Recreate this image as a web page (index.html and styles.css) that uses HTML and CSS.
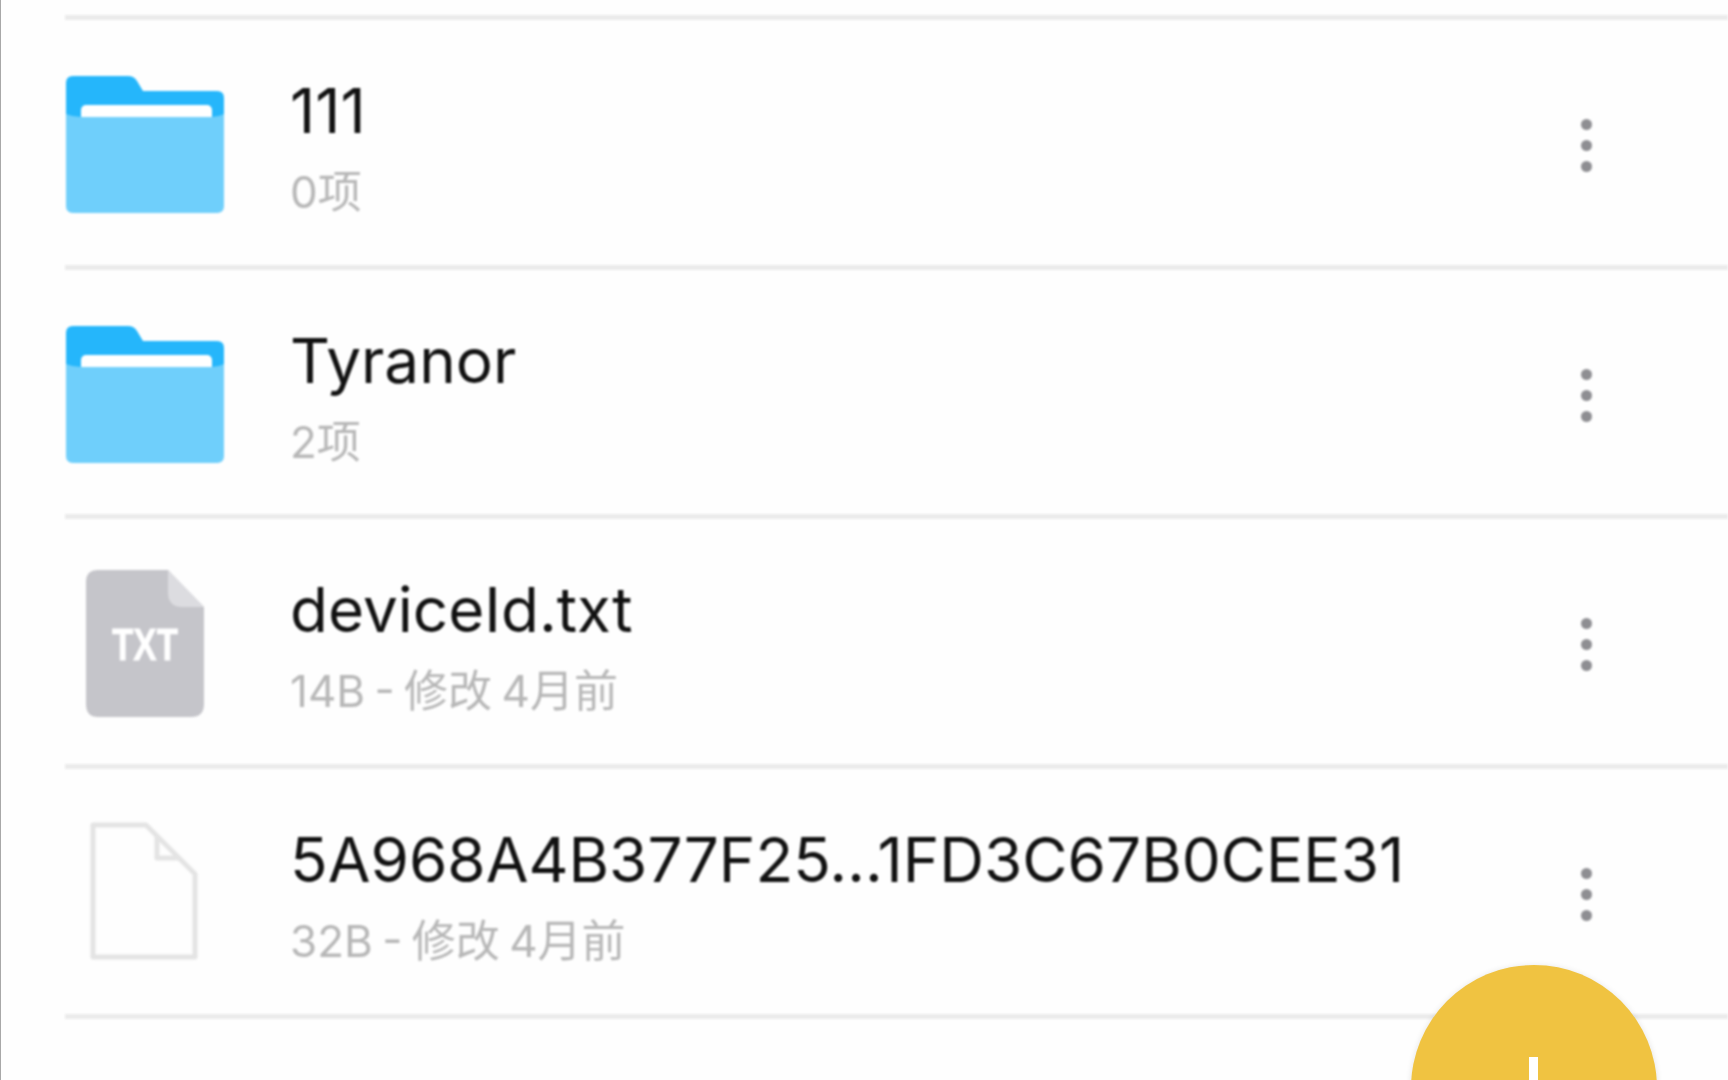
FILE: index.html
```html
<!DOCTYPE html>
<html lang="zh">
<head>
<meta charset="utf-8">
<title>Files</title>
<link rel="stylesheet" href="styles.css">
</head>
<body>
<main class="screen">
  <ul class="list">
    <li class="row">
      <svg class="icon" viewBox="0 0 158 137"><path class="f-back" d="M7 0H62Q68 0 71 5L77 15H151Q158 15 158 22V60H0V7Q0 0 7 0Z"/><rect class="f-paper" x="15" y="29" width="131" height="16" rx="5"/><path class="f-front" d="M0 38Q7 41 15 41H146Q152 41 158 38V130Q158 137 151 137H7Q0 137 0 130Z"/></svg>
      <div class="info"><div class="name">111</div><div class="meta">0项</div></div>
      <div class="more"><i></i><i></i><i></i></div>
    </li>
    <li class="row">
      <svg class="icon" viewBox="0 0 158 137"><path class="f-back" d="M7 0H62Q68 0 71 5L77 15H151Q158 15 158 22V60H0V7Q0 0 7 0Z"/><rect class="f-paper" x="15" y="29" width="131" height="16" rx="5"/><path class="f-front" d="M0 38Q7 41 15 41H146Q152 41 158 38V130Q158 137 151 137H7Q0 137 0 130Z"/></svg>
      <div class="info"><div class="name">Tyranor</div><div class="meta">2项</div></div>
      <div class="more"><i></i><i></i><i></i></div>
    </li>
    <li class="row">
      <svg class="icon" viewBox="0 0 158 147"><path class="t-body" d="M32 0H102L138 37V134Q138 147 125 147H32Q20 147 20 134V12Q20 0 32 0Z"/><path class="t-fold" d="M102 0L138 37H116Q102 37 102 22Z"/><text class="t-label" x="79" y="90" textLength="66" lengthAdjust="spacingAndGlyphs">TXT</text></svg>
      <div class="info"><div class="name">deviceId.txt</div><div class="meta">14B - 修改 4月前</div></div>
      <div class="more"><i></i><i></i><i></i></div>
    </li>
    <li class="row">
      <svg class="icon" viewBox="0 2 158 137"><path class="b-file" d="M27 2H80L129 51V134H27Z"/><path class="b-fold" d="M91 13V35H113"/></svg>
      <div class="info"><div class="name">5A968A4B377F25…1FD3C67B0CEE31</div><div class="meta">32B - 修改 4月前</div></div>
      <div class="more"><i></i><i></i><i></i></div>
    </li>
  </ul>
  <button class="fab" aria-label="add"><span class="plus"></span></button>
</main>
</body>
</html>
```

FILE: styles.css
```css
html, body {
  margin: 0;
  padding: 0;
  height: 100%;
  background: #fff;
}

.screen {
  position: relative;
  box-sizing: border-box;
  width: 1728px;
  height: 1080px;
  overflow: hidden;
  padding-top: 15px;
  border-left: 1px solid #a8a8a8;
  background: #fefefe;
  font-family: Inter, "Noto Sans CJK SC", sans-serif;
}

.list {
  list-style: none;
  margin: 0 0 0 64px;
  padding: 0;
  border-top: 5px solid #ebebeb;
  filter: blur(0.8px);
}

.row {
  box-sizing: border-box;
  height: 249.7px;
  display: flex;
  align-items: center;
  border-bottom: 5px solid #ebebeb;
}

.icon {
  flex: none;
  width: 158px;
  height: auto;
  display: block;
  margin: 4px 0 0 1px;
  overflow: visible;
}

.f-back { fill: #25b6fb; }
.f-paper { fill: #fff; }
.f-front { fill: #6fcffb; }
.t-body { fill: #c5c5ca; }
.t-fold { fill: #dcdce0; }
.t-label {
  fill: #fff;
  stroke: #fff;
  stroke-width: 0.8;
  font-family: "Liberation Sans", sans-serif;
  font-size: 45px;
  font-weight: 700;
  text-anchor: middle;
}
.b-file, .b-fold {
  fill: none;
  stroke: #e4e4e4;
  stroke-width: 5;
  stroke-linejoin: round;
}

.info {
  flex: 1;
  margin: 7px 0 0 66px;
  min-width: 0;
}

.name {
  font-size: 62px;
  line-height: 74px;
  color: #111;
}

.meta {
  margin-top: 18px;
  font-size: 44px;
  line-height: 52px;
  word-spacing: -3px;
  color: #b7b7b7;
}

.more {
  flex: none;
  width: 11px;
  margin: 6px 136px 0 0;
  display: flex;
  flex-direction: column;
  gap: 10px;
}

.more i {
  display: block;
  width: 11px;
  height: 11px;
  border-radius: 50%;
  background: #8e8e92;
}

.fab {
  position: absolute;
  left: 1410px;
  top: 965px;
  width: 246px;
  height: 246px;
  padding: 0;
  border: 0;
  border-radius: 50%;
  background: #f0c341;
  box-shadow: 0 1px 6px rgba(0, 0, 0, 0.12);
  filter: blur(0.5px);
}

.plus {
  position: absolute;
  left: 118px;
  top: 92px;
  width: 9px;
  height: 60px;
  background: #fff;
}
```
